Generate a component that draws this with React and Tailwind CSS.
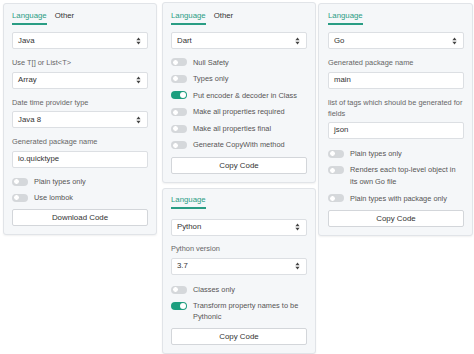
import React from "react";

const font = { fontFamily: '"Liberation Sans", Arial, sans-serif' };

function Arrows() {
  return (
    <svg width="5" height="8" viewBox="0 0 5 8" className="shrink-0">
      <path d="M2.5 0.5 L4.6 3.2 L0.4 3.2 Z" fill="#444" />
      <path d="M2.5 7.5 L4.6 4.8 L0.4 4.8 Z" fill="#444" />
    </svg>
  );
}

function Select({ value, className = "" }) {
  return (
    <div
      className={`h-[17px] flex items-center justify-between pl-[5px] pr-[6px] bg-white border border-[#dcdfe3] rounded-[2px] text-[7.8px] text-[#333] ${className}`}
    >
      <span>{value}</span>
      <Arrows />
    </div>
  );
}

function Input({ value, className = "" }) {
  return (
    <div
      className={`h-[17px] flex items-center pl-[5px] bg-white border border-[#dcdfe3] rounded-[2px] text-[7.8px] text-[#333] ${className}`}
    >
      {value}
    </div>
  );
}

function Label({ children, className = "" }) {
  return (
    <div className={`text-[7.4px] leading-[11.6px] text-[#666] ${className}`}>{children}</div>
  );
}

function Toggle({ on }) {
  return on ? (
    <div className="w-[16px] h-[8px] rounded-full bg-[#1d9e7f] flex items-center justify-end pr-[1px] shrink-0">
      <div className="w-[6px] h-[6px] rounded-full bg-white" />
    </div>
  ) : (
    <div className="w-[16px] h-[8px] rounded-full bg-[#d5d8db] flex items-center pl-[0.5px] shrink-0">
      <div className="w-[7px] h-[7px] rounded-full bg-white border border-[#cfd2d5]" />
    </div>
  );
}

function ToggleRow({ on, children, className = "" }) {
  return (
    <div className={`flex items-start gap-[6px] ${className}`}>
      <div className="h-[11.6px] flex items-center">
        <Toggle on={on} />
      </div>
      <div className="text-[7.4px] leading-[11.6px] text-[#555]">{children}</div>
    </div>
  );
}

function Button({ children, className = "" }) {
  return (
    <div
      className={`h-[17px] flex items-center justify-center bg-white border border-[#d3d6da] rounded-[2px] text-[7.9px] text-[#333] ${className}`}
    >
      {children}
    </div>
  );
}

function Tabs({ other = true }) {
  return (
    <div className="flex items-start gap-[8px] text-[7.8px] leading-[10px]">
      <div className="text-[#2a9d84] border-b-2 border-[#2a9d84] pb-[2px]">Language</div>
      {other && <div className="text-[#333]">Other</div>}
    </div>
  );
}

function Panel({ children, className = "" }) {
  return (
    <div
      className={`bg-[#f5f7f9] border border-[#e1e4e8] rounded-[3px] shadow-[0_1px_2px_rgba(0,0,0,0.06)] px-[8px] flex flex-col ${className}`}
    >
      {children}
    </div>
  );
}

export default function App() {
  return (
    <div className="w-[474px] h-[354px] bg-white overflow-hidden" style={font}>
      <div className="flex items-start pl-[3px]">
        {/* Column 1: Java */}
        <Panel className="w-[154px] mt-[3px] pt-[7px] pb-[8px]">
          <Tabs />
          <Select value="Java" className="mt-[7px]" />
          <Label className="mt-[8px]">Use T[] or List&lt;T&gt;</Label>
          <Select value="Array" className="mt-[3px]" />
          <Label className="mt-[8px]">Date time provider type</Label>
          <Select value="Java 8" className="mt-[3px]" />
          <Label className="mt-[8px]">Generated package name</Label>
          <Input value="io.quicktype" className="mt-[3px]" />
          <ToggleRow className="mt-[8px]">Plain types only</ToggleRow>
          <ToggleRow className="mt-[4.5px]">Use lombok</ToggleRow>
          <Button className="mt-[6px]">Download Code</Button>
        </Panel>

        {/* Column 2 */}
        <div className="w-[154px] ml-[5px] flex flex-col gap-[5px] mt-[2px]">
          <Panel className="pt-[8px] pb-[8px]">
            <Tabs />
            <Select value="Dart" className="mt-[7px]" />
            <div className="mt-[7.5px] flex flex-col gap-[5px]">
              <ToggleRow>Null Safety</ToggleRow>
              <ToggleRow>Types only</ToggleRow>
              <ToggleRow on>Put encoder &amp; decoder in Class</ToggleRow>
              <ToggleRow>Make all properties required</ToggleRow>
              <ToggleRow>Make all properties final</ToggleRow>
              <ToggleRow>Generate CopyWith method</ToggleRow>
            </div>
            <Button className="mt-[6px]">Copy Code</Button>
          </Panel>
          <Panel className="pt-[6px] pb-[8px]">
            <Tabs other={false} />
            <Select value="Python" className="mt-[9.5px]" />
            <Label className="mt-[7.5px]">Python version</Label>
            <Select value="3.7" className="mt-[3px]" />
            <ToggleRow className="mt-[9.5px]">Classes only</ToggleRow>
            <ToggleRow on className="mt-[4px]">
              Transform property names to be
              <br />
              Pythonic
            </ToggleRow>
            <Button className="mt-[5px]">Copy Code</Button>
          </Panel>
        </div>

        {/* Column 3: Go */}
        <Panel className="w-[155px] ml-[2px] mt-[3px] pt-[7px] pb-[8px] pl-[9px]">
          <Tabs other={false} />
          <Select value="Go" className="mt-[7px]" />
          <Label className="mt-[8px]">Generated package name</Label>
          <Input value="main" className="mt-[3px]" />
          <Label className="mt-[8px]">
            list of tags which should be generated for
            <br />
            fields
          </Label>
          <Input value="json" className="mt-[2px]" />
          <ToggleRow className="mt-[9px]">Plain types only</ToggleRow>
          <ToggleRow className="mt-[5px]">
            Renders each top-level object in
            <br />
            its own Go file
          </ToggleRow>
          <ToggleRow className="mt-[5px]">Plain types with package only</ToggleRow>
          <Button className="mt-[6px]">Copy Code</Button>
        </Panel>
      </div>
    </div>
  );
}
